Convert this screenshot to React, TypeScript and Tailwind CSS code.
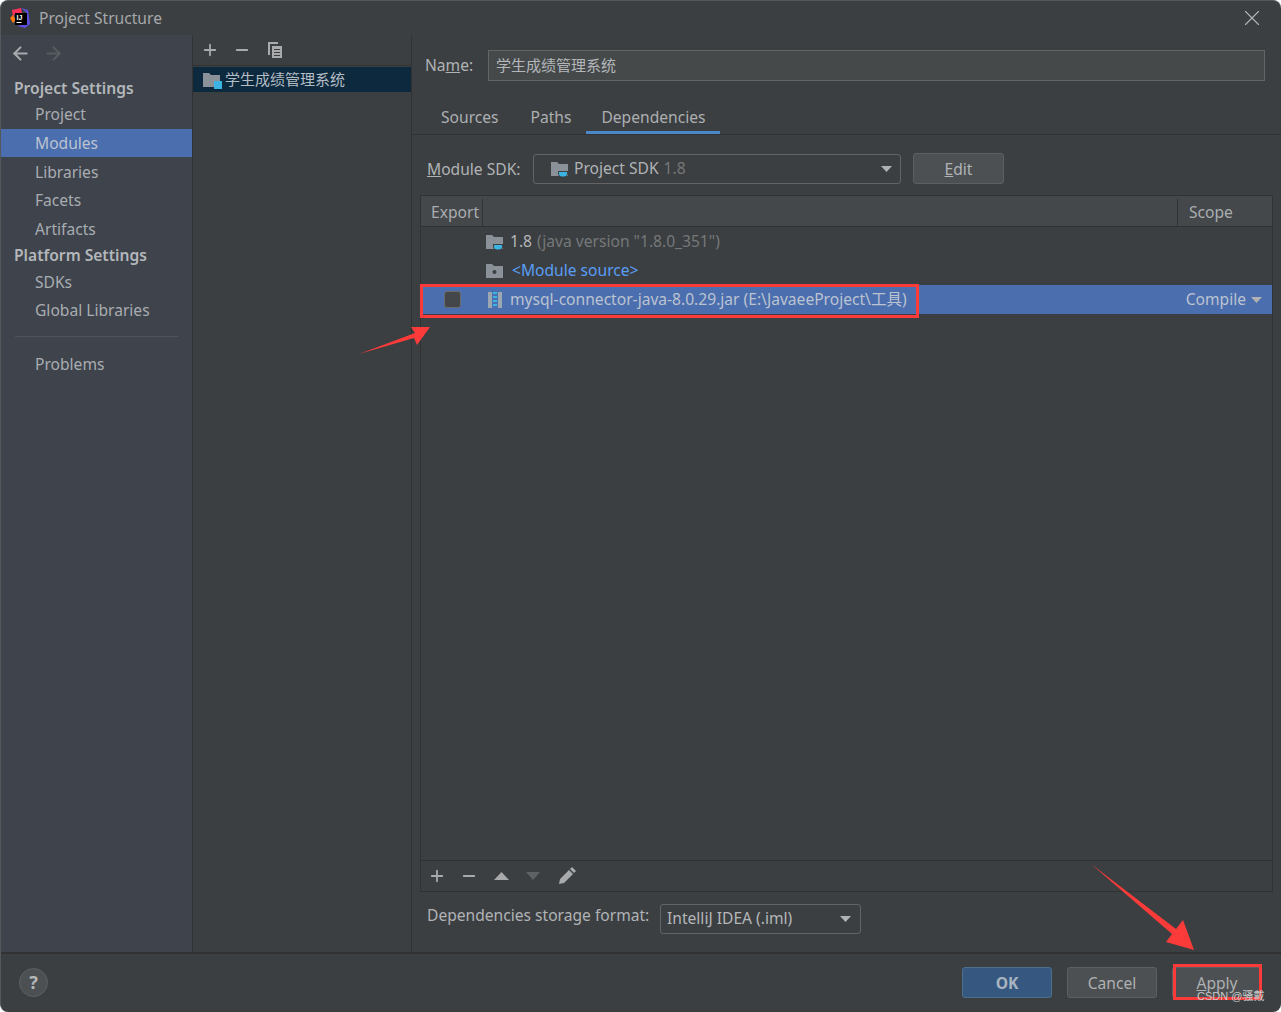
import { Plus, Minus, X, ArrowLeft, ArrowRight } from 'lucide-react';
import clsx from 'clsx';

const FONT = "font-['Noto_Sans','Noto_Sans_CJK_SC',sans-serif]";

const Caret = ({ className }: { className?: string }) => (
  <svg width="11" height="6" viewBox="0 0 11 6" className={className}>
    <path d="M0 0h11L5.5 6z" fill="#afb1b3" />
  </svg>
);

const Folder = ({ badge }: { badge?: 'cup' | 'square' | 'dot' }) => (
  <svg width="20" height="18" viewBox="0 0 20 18" className="shrink-0">
    <path d="M1 2h6l2 2h9v12H1z" fill="#8a9199" />
    {badge === 'square' && <rect x="12" y="10" width="8" height="8" fill="#3bb4e3" />}
    {badge === 'cup' && (
      <>
        <path d="M8 11h10v2a4 4 0 0 1-4 4h-2a4 4 0 0 1-4-4z" fill="#3c3f41" />
        <path d="M9 12h8v1.5a3 3 0 0 1-3 3h-2a3 3 0 0 1-3-3z" fill="#3bb4e3" />
      </>
    )}
    {badge === 'dot' && <circle cx="9.5" cy="10" r="2" fill="#3c3f41" />}
  </svg>
);

const SideItem = ({ label, active }: { label: string; active?: boolean }) => (
  <div
    className={clsx(
      'pl-[34px] flex items-center text-[15.6px]',
      active ? 'h-[28px] mb-[1px] pt-[2px] bg-[#4b6eaf] text-[#bbc3d0]' : 'h-[28.5px] text-[#a9adb1]'
    )}
  >
    {label}
  </div>
);

const SideHead = ({ label, className }: { label: string; className: string }) => (
  <div className={clsx('pl-[13px] flex items-center text-[15.6px] font-semibold text-[#b4b7ba]', className)}>{label}</div>
);

const Tab = ({ label, active }: { label: string; active?: boolean }) => (
  <div
    className={clsx(
      'h-[36px] pt-[6px] flex items-center justify-center border-b-[3px] text-[15.6px] text-[#acafb2]',
      active ? 'border-[#4a88c7] w-[134px]' : 'border-transparent'
    )}
  >
    {label}
  </div>
);

const Arrow = ({ className, w, h, d }: { className: string; w: number; h: number; d: string }) => (
  <svg width={w} height={h} viewBox={`0 0 ${w} ${h}`} className={className}>
    <path d={d} fill="#fb3a3a" />
  </svg>
);

export default function App() {
  return (
    <div className={clsx('w-[1281px] h-[1012px] bg-white relative overflow-hidden', FONT)}>
      <div className="w-full h-full bg-[#3c3f41] rounded-[8px] flex flex-col border-l border-t border-[#55585a]">
        {/* title bar */}
        <div className="h-[34px] shrink-0 flex items-center pl-[9px] pr-[16px]">
          <svg width="20" height="20" viewBox="0 0 20 20" className="shrink-0">
            <path d="M2 2L11 0l1 6H5L3 9z" fill="#fe315d" />
            <path d="M11 0l7 2 2 14-5 4-8-2 8-2 1-12z" fill="#5a4fe0" />
            <path d="M0 10l3-3 3 5-3 3z" fill="#f97a12" />
            <rect x="5" y="5" width="12" height="12" fill="#000" />
            <text x="6.5" y="12" fontSize="7" fontWeight="700" fill="#fff" fontFamily="Liberation Sans">IJ</text>
            <rect x="6.5" y="14" width="5" height="1" fill="#fff" />
          </svg>
          <span className="ml-[9px] pt-[2px] text-[15.6px] text-[#a5a8ab]">Project Structure</span>
          <X size={26} strokeWidth={1} className="ml-auto text-[#b4b6b8]" />
        </div>

        <div className="flex-1 flex min-h-0 border-b-2 border-[#323232]">
          {/* left nav */}
          <div className="w-[192px] shrink-0 bg-[#3e434c] border-r border-[#323232]">
            <div className="h-[40px] pl-[9px] pb-[4px] flex items-center gap-[12px]">
              <ArrowLeft size={21} strokeWidth={2.4} className="text-[#a8aaac]" />
              <ArrowRight size={21} strokeWidth={2.4} className="text-[#595c5f]" />
            </div>
            <SideHead label="Project Settings" className="h-[25.5px] pt-[1px]" />
            <SideItem label="Project" />
            <SideItem label="Modules" active />
            <SideItem label="Libraries" />
            <SideItem label="Facets" />
            <SideItem label="Artifacts" />
            <SideHead label="Platform Settings" className="h-[24.5px]" />
            <SideItem label="SDKs" />
            <SideItem label="Global Libraries" />
            <div className="mt-[11px] mx-[14px] border-t border-[#50545a]" />
            <div className="mt-[13px]">
              <SideItem label="Problems" />
            </div>
          </div>

          {/* module list */}
          <div className="w-[219px] shrink-0 border-r border-[#323232]">
            <div className="h-[31px] border-b border-[#323232] flex items-center pl-[8px] gap-[14px] text-[#a8aaac]">
              <Plus size={18} strokeWidth={2.4} />
              <Minus size={18} strokeWidth={2.4} />
              <svg width="18" height="18" viewBox="0 0 18 18" className="ml-[1px]">
                <path d="M2 1h10v2H4v11H2z" fill="#a8aaac" />
                <path d="M6 5h10v12H6z" fill="#a8aaac" />
                <path d="M8 8h6v1H8zM8 11h6v1H8zM8 14h6v1H8z" fill="#3c3f41" />
              </svg>
            </div>
            <div className="mt-[1px] h-[25px] bg-[#0d293e] flex items-center pl-[9px] gap-[3px]">
              <Folder badge="square" />
              <span className="text-[15px] text-[#b4bcc4]">学生成绩管理系统</span>
            </div>
          </div>

          {/* detail */}
          <div className="flex-1 min-w-0 flex flex-col">
            <div className="pt-[15px] pl-[13px] pr-[16px] flex items-center h-[46px]">
              <span className="w-[63px] text-[15.6px] text-[#b0b3b6]">
                Na<span className="underline">m</span>e:
              </span>
              <div className="flex-1 h-[31px] bg-[#45494a] border border-[#646464] flex items-center pl-[7px] text-[15px] text-[#b4b7ba]">
                学生成绩管理系统
              </div>
            </div>
            <div className="mt-[17px] h-[36px] border-b border-[#323232] flex pl-[29px] gap-[32px] box-content">
              <Tab label="Sources" />
              <Tab label="Paths" />
              <div className="ml-[-17px]">
                <Tab label="Dependencies" active />
              </div>
            </div>
            <div className="mt-[18px] pl-[15px] flex items-center h-[31px]">
              <span className="w-[106px] pt-[2px] text-[15.6px] text-[#b0b3b6]">
                <span className="underline">M</span>odule SDK:
              </span>
              <div className="w-[368px] h-[30px] pt-[1px] border border-[#646464] rounded-[3px] flex items-center pl-[16px] pr-[8px]">
                <Folder badge="cup" />
                <span className="ml-[4px] text-[15.6px] text-[#b0b3b6]">Project SDK</span>
                <span className="ml-[5px] text-[15.6px] text-[#75787a]">1.8</span>
                <Caret className="ml-auto" />
              </div>
              <div className="ml-[12px] w-[91px] h-[31px] pt-[2px] bg-[#4c5052] border border-[#5e6060] rounded-[3px] flex items-center justify-center text-[15.6px] text-[#b0b3b6]">
                <span><span className="underline">E</span>dit</span>
              </div>
            </div>

            {/* dependency table */}
            <div className="mt-[11px] ml-[8px] mr-[8px] h-[697px] border border-[#323232] flex flex-col">
              <div className="h-[31px] shrink-0 pt-[3px] bg-[#45484a] border-b border-[#323232] flex text-[15.6px] text-[#a9adb1]">
                <div className="w-[62px] pl-[10px] flex items-center border-r border-[#323232]">Export</div>
                <div className="flex-1 border-r border-[#323232]" />
                <div className="w-[94px] pl-[11px] flex items-center">Scope</div>
              </div>
              <div className="flex-1 min-h-0">
                <div className="h-[29px] pt-[1px] pl-[64px] flex items-center text-[15.6px]">
                  <Folder badge="cup" />
                  <span className="ml-[5px] text-[#b4b7ba]">1.8</span>
                  <span className="ml-[5px] text-[#75787a]">(java version "1.8.0_351")</span>
                </div>
                <div className="h-[29px] pl-[64px] flex items-center text-[15.6px]">
                  <Folder badge="dot" />
                  <span className="ml-[7px] text-[#589df6]">&lt;Module source&gt;</span>
                </div>
                <div className="h-[29px] bg-[#4b6eaf] flex items-center text-[15.6px] text-[#bbc3d0]">
                  <div className="ml-[23px] w-[17px] h-[17px] bg-[#43474a] border border-[#6b6b6b] rounded-[3px]" />
                  <svg width="16" height="18" viewBox="0 0 16 18" className="ml-[26px] shrink-0">
                    <rect x="1" y="1" width="4" height="16" fill="#9aa7b0" />
                    <rect x="11" y="1" width="4" height="16" fill="#9aa7b0" />
                    <path d="M6 1h4v2H6zM6 5h4v2H6zM6 9h4v2H6zM6 13h4v2H6z" fill="#3bb4e3" />
                  </svg>
                  <span className="ml-[7px]">mysql-connector-java-8.0.29.jar (E:\JavaeeProject\工具)</span>
                  <span className="ml-auto">Compile</span>
                  <Caret className="ml-[5px] mr-[10px]" />
                </div>
              </div>
              <div className="h-[31px] shrink-0 border-t border-[#323232] flex items-center pl-[7px] gap-[14px] text-[#a8aaac]">
                <Plus size={18} strokeWidth={2.4} />
                <Minus size={18} strokeWidth={2.4} />
                <svg width="18" height="10" viewBox="0 0 18 10" className="ml-[1px]"><path d="M1 9h15L8.5 1z" fill="#a8aaac" /></svg>
                <svg width="18" height="10" viewBox="0 0 18 10" className="ml-[-1px]"><path d="M2 1h14L9 9z" fill="#5f6264" /></svg>
                <svg width="18" height="18" viewBox="0 0 18 18" className="ml-[2px]">
                  <path d="M1 17l1-5L11 3l4 4-9 9zM12 2l2-2 4 4-2 2z" fill="#a8aaac" />
                </svg>
              </div>
            </div>

            <div className="pl-[15px] mt-[11px] flex items-center h-[31px]">
              <span className="w-[233px] text-[15.6px] text-[#b0b3b6] mt-[-6px]">Dependencies storage format:</span>
              <div className="w-[201px] h-[30px] pt-[1px] border border-[#646464] rounded-[3px] flex items-center pl-[6px] pr-[9px] text-[15.6px] text-[#b4b7ba]">
                IntelliJ IDEA (.iml)
                <Caret className="ml-auto" />
              </div>
            </div>
          </div>
        </div>

        {/* footer */}
        <div className="h-[58px] shrink-0 flex items-center pl-[18px] pr-[19px] pb-[1px]">
          <div className="w-[29px] h-[29px] rounded-full bg-[#4c5052] border border-[#5e6060] flex items-center justify-center text-[18px] font-bold text-[#b4b6b8]">
            ?
          </div>
          <div className="ml-auto flex gap-[15px]">
            <div className="w-[90px] h-[31px] pt-[2px] bg-[#365880] border border-[#4c708c] rounded-[3px] flex items-center justify-center text-[15.6px] font-bold text-[#a8b4c0]">OK</div>
            <div className="w-[90px] h-[31px] pt-[2px] bg-[#4c5052] border border-[#5e6060] rounded-[3px] flex items-center justify-center text-[15.6px] text-[#afb1b3]">Cancel</div>
            <div className="w-[90px] h-[31px] pt-[2px] bg-[#4c5052] border border-[#5e6060] rounded-[3px] flex items-center justify-center text-[15.6px] text-[#afb1b3]">
              <span><span className="underline">A</span>pply</span>
            </div>
          </div>
        </div>
      </div>

      {/* red annotations lying over the screenshot */}
      <div className="absolute left-[420px] top-[284px] w-[499px] h-[34px] border-[3px] border-[#fb3a3a]" />
      <div className="absolute left-[1173px] top-[964px] w-[89px] h-[36px] border-[3px] border-[#fb3a3a]" />
      <Arrow className="absolute left-[359px] top-[325px]" w={72} h={30} d="M0 29L56 8 52 2 71 2 58 20 55 13z" />
      <Arrow className="absolute left-[1090px] top-[863px]" w={106} h={90} d="M1 1L86 66 93 57 104 87 76 79 82 71z" />
      <span className="absolute left-[1197px] top-[988px] text-[11px] leading-[16px] text-[#c8cacb] font-['Liberation_Sans','Noto_Sans_CJK_SC',sans-serif]">CSDN @骚戴</span>
    </div>
  );
}
